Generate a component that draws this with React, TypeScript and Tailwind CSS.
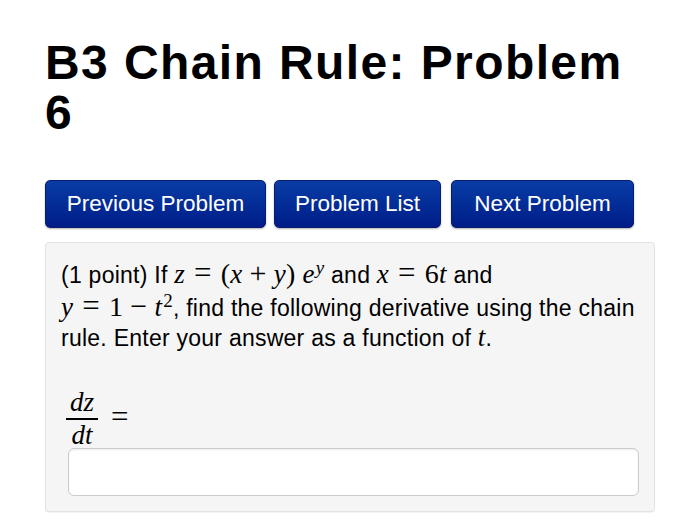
import React from 'react';

const sans = { fontFamily: '"Liberation Sans", Arial, sans-serif' };
const serif = '"Liberation Serif", "Times New Roman", serif';

function V({ children }: { children: React.ReactNode }) {
  return <i style={{ fontFamily: serif }} className="text-[27px] leading-none">{children}</i>;
}

function R({ children }: { children: React.ReactNode }) {
  return <span style={{ fontFamily: serif }} className="text-[28px] leading-none">{children}</span>;
}

function Sup({ italic, children }: { italic?: boolean; children: React.ReactNode }) {
  return (
    <sup
      style={{ fontFamily: serif }}
      className={`ml-[1px] text-[19px] leading-none ${italic ? 'italic' : ''}`}
    >
      {children}
    </sup>
  );
}

// relation operator, MathJax-like spacing
function Rel({ children }: { children: React.ReactNode }) {
  return (
    <span style={{ fontFamily: serif }} className="mx-[9px] text-[31px] leading-none">
      {children}
    </span>
  );
}

// binary operator
function Bin({ children }: { children: React.ReactNode }) {
  return (
    <span style={{ fontFamily: serif }} className="mx-[7px] text-[30px] leading-none">
      {children}
    </span>
  );
}

function NavButton({ label, width }: { label: string; width: string }) {
  return (
    <button
      className={`${width} h-[48px] shrink-0 rounded-[5px] border border-[#0a1d6b] bg-gradient-to-b from-[#0b3ca6] to-[#001c88] text-[22.5px] text-white shadow-[0_1px_2px_rgba(0,0,0,0.3)]`}
      style={sans}
    >
      {label}
    </button>
  );
}

export default function App() {
  return (
    <div className="min-h-[529px] bg-white pl-[45px] pr-[45px] text-black" style={sans}>
      <h1 className="w-[595px] pt-[38px] text-[48px] font-bold leading-[50px] tracking-[1.4px]">
        B3 Chain Rule: Problem 6
      </h1>

      <div className="mt-[42px] flex">
        <NavButton label="Previous Problem" width="w-[221px]" />
        <div className="ml-[8px]">
          <NavButton label="Problem List" width="w-[167px]" />
        </div>
        <div className="ml-[10px]">
          <NavButton label="Next Problem" width="w-[183px]" />
        </div>
      </div>

      <div className="mt-[14px] w-[610px] rounded-[4px] border border-[#e2e2e2] bg-[#f5f5f5] px-[15px] pb-[15px] pt-[14px] shadow-[0_1px_1px_rgba(0,0,0,0.05)]">
        <p className="text-[23px] leading-[30px] tracking-[0.25px]">
          (1 point) If{' '}
          <span className="whitespace-nowrap">
            <V>z</V>
            <Rel>=</Rel>
            <R>(</R>
            <V>x</V>
            <Bin>+</Bin>
            <V>y</V>
            <R>)</R>
            <span className="ml-[7px]" />
            <V>e</V>
            <Sup italic>y</Sup>
          </span>{' '}
          and{' '}
          <span className="whitespace-nowrap">
            <V>x</V>
            <Rel>=</Rel>
            <R>6</R>
            <V>t</V>
          </span>{' '}
          and
          <br />
          <span className="whitespace-nowrap">
            <V>y</V>
            <Rel>=</Rel>
            <R>1</R>
            <Bin>−</Bin>
            <V>t</V>
            <Sup>2</Sup>,
          </span>{' '}
          find the following derivative using the chain rule. Enter your answer as a function of{' '}
          <V>t</V>.
        </p>

        <div className="mt-[35px] flex items-center gap-[12px] pl-[4px]">
          <div className="flex w-[34px] flex-col items-center" style={{ fontFamily: serif }}>
            <i className="text-[27px] leading-[28px]">dz</i>
            <div className="my-[2px] h-[1.5px] w-[32px] bg-black" />
            <i className="text-[27px] leading-[26px]">dt</i>
          </div>
          <span className="mb-[2px] text-[31px] leading-none" style={{ fontFamily: serif }}>=</span>
        </div>

        <input
          className="ml-[7px] block h-[48px] w-[571px] rounded-[6px] border border-[#cccccc] bg-white shadow-[inset_0_1px_2px_rgba(0,0,0,0.08)]"
          type="text"
        />
      </div>
    </div>
  );
}
